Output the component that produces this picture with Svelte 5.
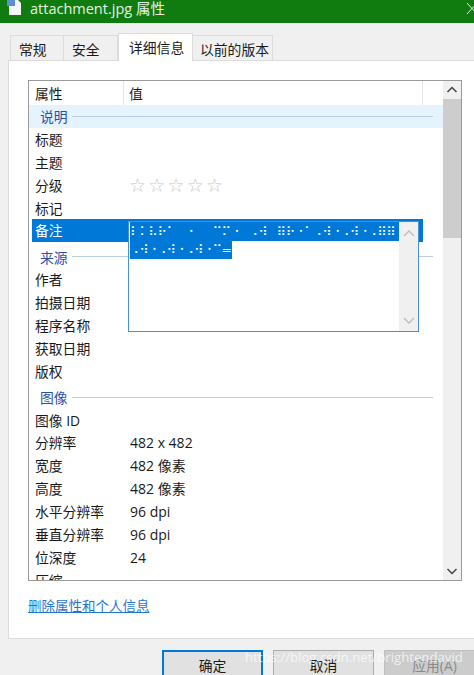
<script>
  const fields = [
    { group: '说明' },
    { k: '标题' }, { k: '主题' }, { k: '分级', stars: true }, { k: '标记' }, { k: '备注', selected: true },
    { group: '来源' },
    { k: '作者' }, { k: '拍摄日期' }, { k: '程序名称' }, { k: '获取日期' }, { k: '版权' },
    { group: '图像' },
    { k: '图像 ID' }, { k: '分辨率', v: '482 x 482' }, { k: '宽度', v: '482 像素' }, { k: '高度', v: '482 像素' },
    { k: '水平分辨率', v: '96 dpi' }, { k: '垂直分辨率', v: '96 dpi' }, { k: '位深度', v: '24' }, { k: '压缩' }
  ];
  const tabs = ['常规', '安全', '详细信息', '以前的版本'];
</script>

<div class="win">
  <header class="title">
    <svg class="fileicon" width="16" height="16" viewBox="0 0 16 16">
      <path d="M2 0h9l3 3v12H2z" fill="#f4f6f8" />
      <rect x="0" y="0" width="8" height="6" fill="#5b8fd6" />
    </svg>
    <span class="name">attachment.jpg 属性</span>
    <svg class="close" width="12" height="12" viewBox="0 0 12 12"><path d="M1 0l10 11M11 0L1 11" stroke="#dfeedd" stroke-width="1" fill="none" /></svg>
  </header>

  <nav class="tabs">
    {#each tabs as t, i}
      <div class="tab" class:active={i === 2} class:last={i === 3}>{t}</div>
    {/each}
  </nav>

  <section class="panel">
    <div class="list">
      <div class="table">
        <div class="head">
          <div class="hk">属性</div>
          <div class="hv">值</div>
          <div class="hrest"></div>
        </div>
        <div class="rows">
          {#each fields as f, i}
            {#if f.group}
              <div class="group" class:hot={i === 0}>
                <span>{f.group}</span><i></i>
              </div>
            {:else}
              <div class="row" class:sel={f.selected}>
                <div class="k">{f.k}</div>
                <div class="v">
                  {#if f.stars}
                    <span class="stars">☆☆☆☆☆</span>
                  {:else if f.v}
                    {f.v}
                  {/if}
                </div>
              </div>
            {/if}
          {/each}
        </div>
      </div>
      <div class="sb">
        <svg width="18" height="18" viewBox="0 0 18 18"><path d="M4.500 11l4.500-4.500 4.500 4.500" fill="none" stroke="#444" stroke-width="1.5" /></svg>
        <div class="thumb"></div>
        <div class="track"></div>
        <svg width="18" height="18" viewBox="0 0 18 18"><path d="M4.500 7l4.500 4.500 4.500-4.500" fill="none" stroke="#444" stroke-width="1.5" /></svg>
      </div>
    </div>

    <a class="link" href="#top">删除属性和个人信息</a>

    <div class="popup">
      <div class="ptext"><span>⠇⠅⠧⠗⠁⠀⠐⠀⠀⠉⠍⠐⠀⠠⠺⠀⠿⠗⠐⠁⠠⠺⠐⠠⠺⠐⠠⠿⠿⠐⠺</span><br /><span>⠠⠺⠐⠠⠺⠐⠠⠺⠐⠉=</span></div>
      <div class="psb">
        <svg width="18" height="18" viewBox="0 0 18 18"><path d="M4 11l5-5 5 5" fill="none" stroke="#bdbdbd" stroke-width="1.4" /></svg>
        <svg width="18" height="18" viewBox="0 0 18 18"><path d="M4 7l5 5 5-5" fill="none" stroke="#bdbdbd" stroke-width="1.4" /></svg>
      </div>
    </div>
  </section>

  <footer class="btns">
    <button class="ok">确定</button>
    <button>取消</button>
    <button class="off">应用(A)</button>
  </footer>

  <div class="wm">https://blog.csdn.net/brightendavid</div>
</div>

<style>
  :global(body) { margin: 0; background: #f0f0f0; }
  .win {
    position: relative;
    width: 474px; height: 675px; overflow: hidden;
    background: #f0f0f0; color: #1a1a1a;
    font-family: "Open Sans", "Noto Sans CJK SC", sans-serif;
    font-size: 13.8px;
    display: flex; flex-direction: column;
  }
  .title {
    height: 23px; background: #107c10; color: #e4f1e4;
    display: flex; align-items: center; flex: none;
    font-size: 14.500px; padding-left: 7px;
  }
  .fileicon { margin-top: -8px; flex: none; }
  .name { margin-left: 7px; margin-top: -8px; }
  .close { margin-left: auto; margin-right: -4px; margin-top: -5px; }
  .tabs {
    height: 37px; flex: none; display: flex; align-items: flex-end; padding-left: 10px;
    position: relative; z-index: 1;
  }
  .tab {
    height: 25px; width: 54px; padding-left: 8px; box-sizing: border-box;
    border: 1px solid #dcdcdc; border-bottom: none; border-left-width: 0;
    background: #f0f0f0; line-height: 28px; white-space: nowrap;
  }
  .tab:first-child { border-left-width: 1px; }
  .tab.active {
    height: 28px; width: 75px; background: #fff; padding-left: 10px; line-height: 28px; margin-bottom: -1px;
    border: 1px solid #dcdcdc; border-bottom: none;
  }
  .tab.last { width: 80px; padding-left: 7px; }
  .panel {
    position: relative;
    height: 579px; flex: none; margin-left: 8px;
    background: #fff; border: 1px solid #dcdcdc; border-right: none;
    box-sizing: border-box; padding: 19px 0 0 19px;
  }
  .list {
    width: 434px; height: 501px; box-sizing: border-box;
    border: 1px solid #9a9a9a; display: flex; overflow: hidden; background: #fff;
  }
  .table { flex: 1; min-width: 0; }
  .head { height: 24px; display: flex; line-height: 25px; }
  .hk { width: 88px; padding-left: 6px; border-right: 1px solid #e5e5e5; }
  .hv { flex: 1; padding-left: 5px; border-right: 1px solid #e5e5e5; }
  .hrest { width: 20px; }
  .group {
    height: 22.9px; margin-top: 3px; display: flex; align-items: center; gap: 4px;
    padding: 0 10px 0 11px; color: #2a4fa8;
  }
  .group:first-child { margin-top: 0; }
  .group.hot { background: #e5f3fe; }
  .group i { flex: 1; height: 1px; background: #b9cde6; }
  .row { height: 22.9px; display: flex; line-height: 24px; padding-left: 6px; }
  .k { width: 95px; white-space: nowrap; }
  .v { flex: 1; font-size: 14px; }
  .row.sel { background: #0078d7; color: #fff; margin: 0 20px 0 3px; padding-left: 3px; }
  .stars { color: #c6c6c6; font-size: 19px; letter-spacing: 2.200px; font-family: "DejaVu Sans", sans-serif; line-height: 22px; display: block; margin-left: -1px; }
  .sb {
    width: 18px; flex: none; background: #f0f0f0; display: flex; flex-direction: column;
  }
  .sb svg { flex: none; }
  .thumb { height: 139px; background: #cdcdcd; flex: none; }
  .track { flex: 1; }
  .link {
    display: inline-block; margin: 14px 0 0 0;
    color: #1f76d1; text-decoration: underline; font-size: 13.5px;
  }
  .popup {
    position: absolute; left: 119px; top: 160px;
    width: 291px; height: 111px; box-sizing: border-box;
    background: #fff; border: 1px solid #4a90d0; display: flex;
  }
  .ptext {
    flex: 1; min-width: 0; padding: 1px 0 0 1px; font-family: "DejaVu Sans", sans-serif;
    font-size: 12.500px; line-height: 18px; color: #fff; white-space: nowrap;
  }
  .ptext span { background: #0078d7; padding: 2px 0; }
  .psb {
    width: 19px; background: #f0f0f0; display: flex; flex-direction: column; justify-content: space-between;
    align-items: center; padding: 3px 0 2px; flex: none;
  }
  .btns {
    flex: 1; display: flex; gap: 10px; padding: 11px 0 0 162px; align-items: flex-start;
  }
  button {
    width: 101px; height: 30px; flex: none; font: inherit; color: #1a1a1a;
    background: #e1e1e1; border: 1px solid #adadad; padding: 0;
  }
  .ok { border: 2px solid #0078d7; }
  .off { background: #cccccc; color: #8a8a8a; border-color: #bfbfbf; }
  .wm {
    position: absolute; left: 245px; top: 648px;
    color: rgba(255, 255, 255, 0.72); font-size: 13.2px; white-space: nowrap;
    font-family: "Open Sans", sans-serif;
  }
</style>
